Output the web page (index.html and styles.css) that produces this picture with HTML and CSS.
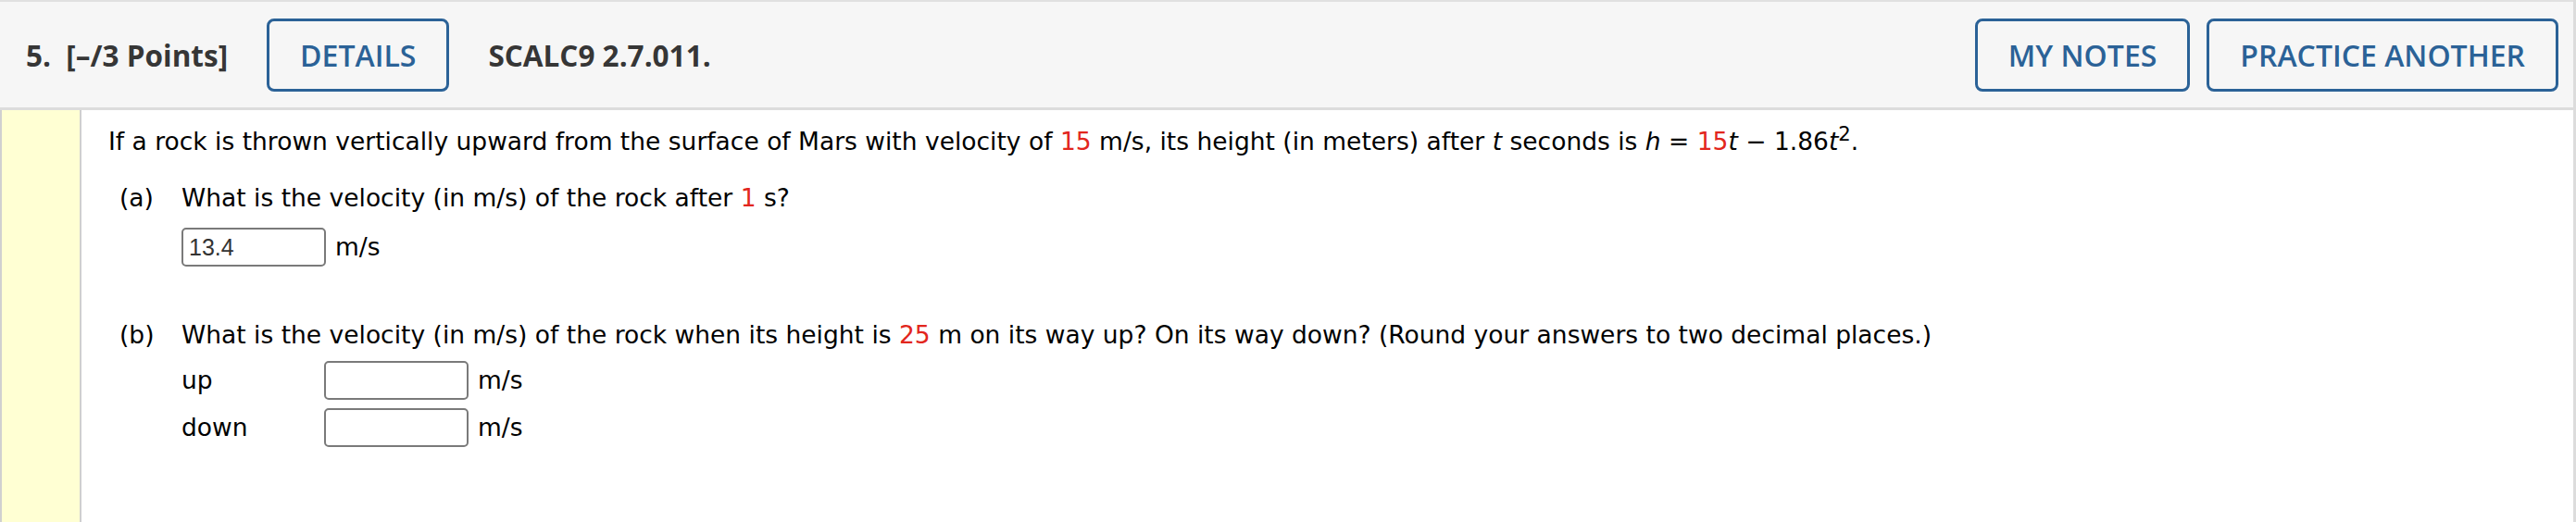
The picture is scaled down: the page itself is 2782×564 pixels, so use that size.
FILE: index.html
```html
<!DOCTYPE html>
<html lang="en">
<head>
<meta charset="utf-8">
<title>Question 5</title>
<link rel="stylesheet" href="styles.css">
</head>
<body>
<div class="question">
  <div class="qhead">
    <span class="qnum">5.&nbsp; [–/3 Points]</span>
    <button class="qbtn">DETAILS</button>
    <span class="qref">SCALC9 2.7.011.</span>
    <span class="spacer"></span>
    <button class="qbtn">MY NOTES</button>
    <button class="qbtn">PRACTICE ANOTHER</button>
  </div>
  <div class="qbody">
    <div class="strip"></div>
    <div class="content">
      <p class="stem">If a rock is thrown vertically upward from the surface of Mars with velocity of <span class="red">15</span> m/s, its height (in meters) after <i>t</i> seconds is <i>h</i> = <span class="red">15</span><i>t</i> − 1.86<i>t</i><sup>2</sup>.</p>
      <div class="part part-a">
        <div class="plabel">(a)</div>
        <div class="pmain">
          <div class="ptext">What is the velocity (in m/s) of the rock after <span class="red">1</span> s?</div>
          <div class="arow"><span class="answer filled">13.4</span><span class="unit">m/s</span></div>
        </div>
      </div>
      <div class="part part-b">
        <div class="plabel">(b)</div>
        <div class="pmain">
          <div class="ptext">What is the velocity (in m/s) of the rock when its height is <span class="red">25</span> m on its way up? On its way down? (Round your answers to two decimal places.)</div>
          <div class="grid">
            <span class="glabel">up</span><span class="answer"></span><span class="unit">m/s</span>
            <span class="glabel">down</span><span class="answer"></span><span class="unit">m/s</span>
          </div>
        </div>
      </div>
    </div>
  </div>
</div>
</body>
</html>
```

FILE: styles.css
```css
html, body {
  margin: 0;
  padding: 0;
  background: #ffffff;
}
.question {
  border-right: 3px solid #dcdcdc;
  min-height: 564px;
}
.qhead {
  display: flex;
  align-items: center;
  height: 114px;
  background: #f6f6f6;
  border-top: 2px solid #e0e0e0;
  border-bottom: 3px solid #dcdcdc;
  padding: 0 16px 0 28px;
  font-family: "Open Sans", sans-serif;
}
.qnum, .qref {
  font-weight: 700;
  font-size: 31.5px;
  color: #363636;
  white-space: pre;
}
.qbtn {
  box-sizing: border-box;
  height: 79px;
  margin-left: 42px;
  padding: 0 33px;
  background: transparent;
  border: 3px solid #2b6297;
  border-radius: 8px;
  font-family: "Open Sans", sans-serif;
  font-weight: 600;
  font-size: 32px;
  color: #2b6297;
}
.qref {
  margin-left: 42px;
}
.spacer {
  flex: 1;
}
.qhead .qbtn:last-child {
  margin-left: 18px;
}
.qbody {
  display: flex;
  min-height: 445px;
  border-left: 2px solid #d0d0d0;
}
.strip {
  width: 84px;
  background: #ffffd3;
  border-right: 2px solid #cfcfcf;
}
.content {
  flex: 1;
  padding-left: 29px;
  font-family: "DejaVu Sans", Verdana, sans-serif;
  font-size: 26.5px;
  line-height: 36px;
  color: #000;
}
.red {
  color: #e2261d;
}
.stem {
  margin: 0;
  padding-top: 16px;
}
.stem sup {
  font-size: 0.8em;
  line-height: 0;
  vertical-align: 0.45em;
}
.part {
  display: flex;
}
.plabel {
  width: 79px;
  box-sizing: border-box;
  padding-left: 12px;
}
.pmain {
  flex: 1;
}
.part-a {
  margin-top: 25px;
}
.arow {
  display: flex;
  align-items: center;
  margin-top: 14px;
}
.answer {
  box-sizing: border-box;
  display: inline-block;
  width: 156px;
  height: 42px;
  border: 2px solid #7a7a7a;
  border-radius: 5px;
  background: #fff;
  font-family: "Liberation Sans", Arial, sans-serif;
  font-size: 25px;
  line-height: 38px;
  color: #333;
  padding-left: 6px;
}
.unit {
  margin-left: 10px;
}
.part-b {
  margin-top: 56px;
}
.grid {
  display: grid;
  grid-template-columns: 154px 156px auto;
  row-gap: 9px;
  align-items: center;
  margin-top: 10px;
}
```
